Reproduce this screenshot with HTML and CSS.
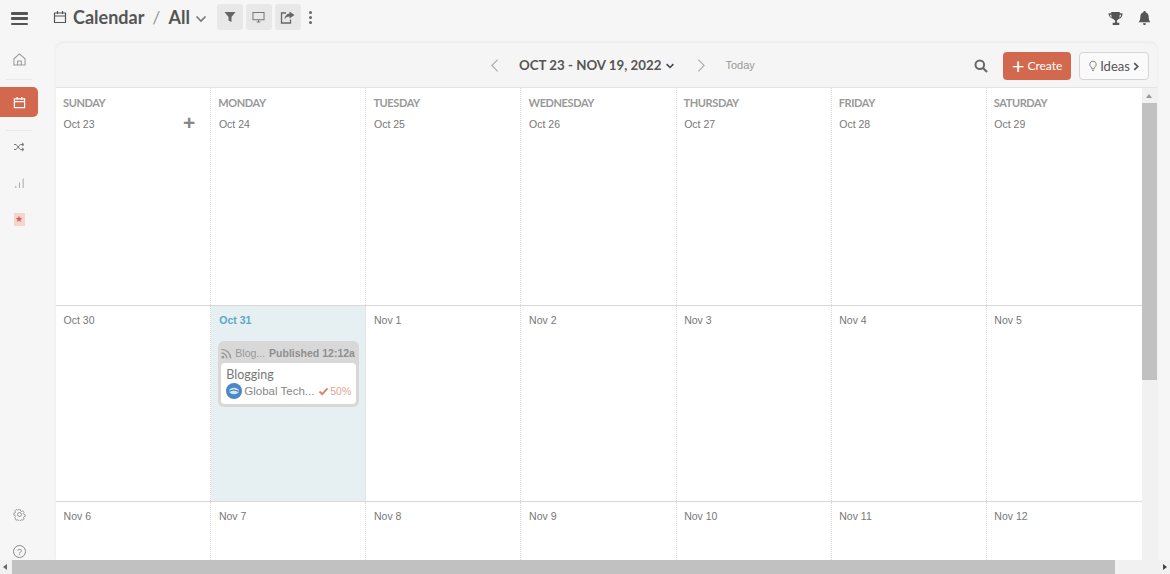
FILE: index.html
```html
<!DOCTYPE html>
<html lang="en">
<head>
<meta charset="utf-8">
<title>Calendar</title>
<link rel="stylesheet" href="styles.css">
</head>
<body>
<div class="app">
  <header class="topbar">
    <button class="burger" aria-label="Menu"><span></span><span></span><span></span></button>
    <svg class="title-icon" viewBox="0 0 14 14"><path d="M1.500 3h11v9.500h-11zM1.500 6h11M4.500 1v3M9.500 1v3" fill="none" stroke="#555" stroke-width="1.200"/></svg>
    <span class="title">Calendar</span>
    <span class="slash">/</span>
    <span class="title">All</span>
    <svg class="title-chev" viewBox="0 0 12 8"><path d="M1.500 1.500L6 6l4.500-4.500" fill="none" stroke="#777" stroke-width="1.600"/></svg>
    <div class="tools">
      <span class="tool"><svg viewBox="0 0 12 12" width="12" height="12"><path d="M.5 1h11L7.500 6v5l-3-1.500V6z" fill="#666"/></svg></span>
      <span class="tool"><svg viewBox="0 0 14 13" width="13" height="12"><path d="M1 1.500h12v8H1zM5 12h4M7 9.500V12" fill="none" stroke="#777" stroke-width="1.100"/></svg></span>
      <span class="tool"><svg viewBox="0 0 15 13" width="15" height="13"><path d="M6 2H1.500v10h9V8.500" fill="none" stroke="#666" stroke-width="1.300"/><path d="M9.500.5L14.500 4 9.500 7.500V5.600C7 5.600 5.400 6.500 4.600 8.600 4.600 5.300 6.600 2.900 9.500 2.600z" fill="#666"/></svg></span>
    </div>
    <span class="kebab"><i></i><i></i><i></i></span>
    <div class="top-right">
      <svg viewBox="0 0 18 16" width="17" height="15"><path d="M4.500 1h9v1.500h3c0 3.500-1.500 5.500-4.200 6-.6.8-1.300 1.300-1.800 1.500v2.500h2.500V15h-7v-2.500h2.500V10c-.5-.2-1.200-.7-1.800-1.500C4 8 1.500 6 1.500 2.500h3zM3 4c.2 1.500.9 2.600 2 3.200-.3-.9-.5-2-.5-3.200zM15 4h-1.500c0 1.200-.2 2.300-.5 3.200 1.100-.6 1.800-1.700 2-3.200z" fill="#555" fill-rule="evenodd"/></svg>
      <svg viewBox="0 0 14 16" width="13" height="15"><path d="M7 0c.8 0 1.200.5 1.200 1.200C10.500 1.800 11.500 3.800 11.500 6c0 3.500 1 5 2 6H.5c1-1 2-2.500 2-6 0-2.200 1-4.200 3.300-4.800C5.800.5 6.200 0 7 0zM5.300 13h3.400c0 1-.7 2-1.700 2s-1.700-1-1.700-2z" fill="#555"/></svg>
    </div>
  </header>
  <div class="main">
    <nav class="sidebar">
      <span class="side-item"><svg viewBox="0 0 14 14" width="13" height="13"><path d="M1 6.200L7 1l6 5.200V13H1zM5 13V8.500h4V13" fill="none" stroke="#999" stroke-width="1.100"/></svg></span>
      <span class="rule"></span>
      <span class="side-active"><svg viewBox="0 0 14 14" width="13" height="13"><path d="M1.500 3h11v9.500h-11zM1.500 6h11M4.500 1v3M9.500 1v3" fill="none" stroke="#fff" stroke-width="1.300"/></svg></span>
      <span class="rule"></span>
      <span class="side-item"><svg viewBox="0 0 14 12" width="12" height="10"><path d="M1 3h2.500l5 6H12M1 9h2.500l5-6H12M10.500 1L13 3l-2.500 2M10.500 7L13 9l-2.500 2" fill="none" stroke="#777" stroke-width="1.200"/></svg></span>
      <span class="side-item"><svg viewBox="0 0 12 12" width="11" height="12"><path d="M2 9v2.500M6 5.500v6M10 1v10.500" fill="none" stroke="#aaa" stroke-width="1.100"/></svg></span>
      <span class="side-item"><span class="star">★</span></span>
      <span class="side-spacer"></span>
      <span class="side-item"><svg viewBox="0 0 16 16" width="13" height="13"><circle cx="8" cy="8" r="2.400" fill="none" stroke="#888" stroke-width="1.100"/><path d="M6.700 1h2.600l.4 2 1.500.7 1.800-1 1.800 1.900-1.100 1.700.6 1.500 2 .5v2.500l-2 .5-.6 1.500 1.100 1.700-1.800 1.900-1.800-1-1.500.6-.4 1.900H6.700l-.4-1.900-1.500-.6-1.800 1L1.200 12.500l1.100-1.700-.6-1.500-2-.5V6.300l2-.5.600-1.500-1.100-1.700L3 .7l1.800 1 1.500-.7z" transform="translate(1.200 1.200) scale(.85)" fill="none" stroke="#888" stroke-width="1.100"/></svg></span>
      <span class="side-item help">?</span>
    </nav>
    <section class="card">
      <div class="toolbar">
        <svg class="nav-arrow" viewBox="0 0 10 16"><path d="M8.500 1.500L2 8l6.500 6.500" fill="none" stroke="#aaa" stroke-width="1.200"/></svg>
        <span class="range">OCT 23 - NOV 19, 2022</span>
        <svg class="range-chev" viewBox="0 0 12 8"><path d="M1.500 1.500L6 6l4.500-4.500" fill="none" stroke="#444" stroke-width="2"/></svg>
        <svg class="nav-arrow next" viewBox="0 0 10 16"><path d="M1.500 1.500L8 8l-6.500 6.500" fill="none" stroke="#aaa" stroke-width="1.200"/></svg>
        <span class="today">Today</span>
        <div class="actions">
          <svg viewBox="0 0 14 14" width="14" height="14"><circle cx="5.800" cy="5.800" r="4.300" fill="none" stroke="#666" stroke-width="2"/><path d="M9 9l4 4" stroke="#666" stroke-width="2.200"/></svg>
          <button class="create"><span class="plus">+</span><span class="create-label">Create</span></button>
          <button class="ideas"><svg viewBox="0 0 10 14" width="8" height="12"><path d="M5 1a4 4 0 0 0-2.400 7.200c.6.500.8 1.300.9 2.300h3c.1-1 .3-1.800.9-2.300A4 4 0 0 0 5 1zM3.700 12.500h2.600" fill="none" stroke="#666" stroke-width="1"/></svg>Ideas<svg viewBox="0 0 7 10" width="6" height="9"><path d="M1.500 1L5.500 5l-4 4" fill="none" stroke="#555" stroke-width="2"/></svg></button>
        </div>
      </div>
      <div class="body">
        <div class="grid">
          <div class="week week-a">
            <div class="day"><div class="dow">SUNDAY</div><div class="date">Oct 23</div><span class="add">+</span></div>
            <div class="day"><div class="dow">MONDAY</div><div class="date">Oct 24</div></div>
            <div class="day"><div class="dow">TUESDAY</div><div class="date">Oct 25</div></div>
            <div class="day"><div class="dow">WEDNESDAY</div><div class="date">Oct 26</div></div>
            <div class="day"><div class="dow">THURSDAY</div><div class="date">Oct 27</div></div>
            <div class="day"><div class="dow">FRIDAY</div><div class="date">Oct 28</div></div>
            <div class="day"><div class="dow">SATURDAY</div><div class="date">Oct 29</div></div>
          </div>
          <div class="week week-b">
            <div class="day"><div class="date">Oct 30</div></div>
            <div class="day current"><div class="date">Oct 31</div>
              <div class="event">
                <div class="event-head"><svg viewBox="0 0 12 12" width="11" height="11"><circle cx="2" cy="10" r="1.500" fill="#999"/><path d="M.5 5.500a6 6 0 0 1 6 6M.5 1.500a10 10 0 0 1 10 10" fill="none" stroke="#999" stroke-width="1.600"/></svg><span class="event-type">Blog...</span><span class="event-status">Published</span><span class="event-time">12:12a</span></div>
                <div class="event-body">
                  <div class="event-title">Blogging</div>
                  <div class="event-meta"><svg viewBox="0 0 16 16" width="16" height="16"><circle cx="8" cy="8" r="8" fill="#4a86c8"/><ellipse cx="8" cy="8" rx="5" ry="3.200" fill="#cfe3f3"/><path d="M3.500 8.500c2-2 6-2 9 0" fill="none" stroke="#2f6cab" stroke-width="1.200"/></svg><span class="event-site">Global Tech...</span><span class="event-pct"><svg viewBox="0 0 12 10" width="11" height="9"><path d="M1.500 5L4.500 8 10.500 1.500" fill="none" stroke="#d9806a" stroke-width="2"/></svg>50%</span></div>
                </div>
              </div>
            </div>
            <div class="day"><div class="date">Nov 1</div></div>
            <div class="day"><div class="date">Nov 2</div></div>
            <div class="day"><div class="date">Nov 3</div></div>
            <div class="day"><div class="date">Nov 4</div></div>
            <div class="day"><div class="date">Nov 5</div></div>
          </div>
          <div class="week week-c">
            <div class="day"><div class="date">Nov 6</div></div>
            <div class="day"><div class="date">Nov 7</div></div>
            <div class="day"><div class="date">Nov 8</div></div>
            <div class="day"><div class="date">Nov 9</div></div>
            <div class="day"><div class="date">Nov 10</div></div>
            <div class="day"><div class="date">Nov 11</div></div>
            <div class="day"><div class="date">Nov 12</div></div>
          </div>
        </div>
        <div class="vscroll"><span class="arrow-up"></span><span class="vthumb"></span></div>
      </div>
    </section>
  </div>
  <div class="hscroll"><span class="arrow-left"></span><span class="hthumb"></span><span class="arrow-right"></span></div>
</div>
</body>
</html>
```
FILE: styles.css
```css
* { box-sizing: border-box; }
html, body { margin: 0; height: 100%; overflow: hidden; }
body { background: #f6f6f6; font-family: "Liberation Sans", Arial, sans-serif; color: #666; }
button { font: inherit; padding: 0; }
.app { width: 1170px; height: 574px; display: flex; flex-direction: column; overflow: hidden; }

.topbar { height: 43px; flex: none; display: flex; align-items: flex-start; position: relative; }
.burger { width: 17px; height: 13px; margin: 12px 0 0 11px; border: 0; background: none; display: flex; flex-direction: column; justify-content: space-between; }
.burger span { display: block; height: 2.500px; background: #555; border-radius: 1px; }
.title-icon { width: 14px; height: 14px; margin: 10px 0 0 25px; }
.title { font: 700 18px/18px Lato, sans-serif; color: #555; margin-top: 8px; }
.title-icon + .title { margin-left: 6px; }
.slash { font: 400 18px/18px Lato, sans-serif; color: #999; margin: 8px 8px 0 8px; }
.title-chev { width: 12px; height: 8px; margin: 15px 0 0 5px; }
.tools { display: flex; gap: 3px; margin: 4px 0 0 10px; }
.tool { width: 26px; height: 26px; background: #e8e8e8; border-radius: 3px; display: flex; align-items: center; justify-content: center; }
.kebab { display: flex; flex-direction: column; gap: 2px; margin: 11px 0 0 8px; }
.kebab i { width: 3px; height: 3px; background: #666; border-radius: 50%; }
.top-right { margin: 11px 19px 0 auto; display: flex; gap: 14px; }

.main { flex: 1; min-height: 0; display: flex; }
.sidebar { width: 56px; flex: none; display: flex; flex-direction: column; align-items: flex-start; padding-top: 7px; }
.side-item { width: 38px; height: 18px; display: flex; align-items: center; justify-content: center; margin-bottom: 18px; }
.rule { width: 26px; height: 1px; background: #e9e9e9; margin: -7px 0 7px 6px; }
.side-active { width: 38px; height: 30px; background: #d2694f; border-radius: 0 5px 5px 0; display: flex; align-items: center; justify-content: center; margin-bottom: 20px; }
.star { width: 11px; height: 13px; background: #f6d5cc; color: #e0565a; font-size: 9px; line-height: 13px; text-align: center; }
.side-spacer { flex: 1; }
.side-item:nth-last-child(2) { margin-bottom: 22px; }
.help { width: 13px; height: 13px; margin: 0 0 2px 13px; border: 1px solid #888; border-radius: 50%; font-size: 9px; color: #888; }

.card { flex: 1; min-width: 0; margin-right: 13px; display: flex; flex-direction: column; background: #f5f5f5; border-radius: 8px 8px 0 0; box-shadow: 0 -1px 3px #e6e6e6; overflow: hidden; }
.toolbar { height: 45px; flex: none; display: flex; align-items: center; border-bottom: 1px solid #e4e4e4; padding-left: 434px; padding-right: 8px; }
.nav-arrow { width: 9px; height: 15px; }
.range { font: 700 13.300px/18px Lato, sans-serif; color: #555; margin-left: 20px; }
.range-chev { width: 10px; height: 6px; margin-left: 4px; margin-top: 2px; }
.nav-arrow.next { margin-left: 22px; }
.today { font-size: 11px; color: #999; margin-left: 19px; }
.actions { margin-left: auto; margin-top: 2px; display: flex; align-items: center; }
.create { width: 68px; height: 28px; margin-left: 15px; background: #d2694f; color: #fff; border: 0; border-radius: 4px; font: 400 12px Lato, sans-serif; display: flex; align-items: center; justify-content: center; gap: 3px; }
.create-label { margin-bottom: 2px; }
.plus { font-size: 22px; line-height: 22px; font-weight: 400; }
.ideas { width: 70px; height: 28px; margin-left: 8px; background: #fafafa; color: #555; border: 1px solid #d5d5d5; border-radius: 4px; font: 400 13px Lato, sans-serif; display: flex; align-items: center; justify-content: center; gap: 3px; }

.body { flex: 1; min-height: 0; display: flex; }
.grid { flex: 1; min-width: 0; background: #fff; overflow: hidden; }
.week { display: grid; grid-template-columns: 155.300px repeat(6, 155.100px); border-bottom: 1px solid #d8d8d8; }
.week-a { height: 218px; }
.week-b { height: 196px; }
.week-c { height: 60px; border-bottom: 0; }
.day { position: relative; border-right: 1px dotted #dcdcdc; padding: 7px 8px 0 7px; }
.day:last-child { border-right: 0; }
.dow { font: 700 11px/15px Lato, sans-serif; color: #999; margin-bottom: 7px; letter-spacing: -.4px; }
.date { font-size: 10.500px; line-height: 14px; color: #777; padding-left: .6px; }
.add { position: absolute; top: 25px; right: 15px; font: 700 21px/19px "Liberation Sans", sans-serif; color: #888; }
.current { background: #e6eff2; padding-right: 7px; }
.current .date { color: #5aa9c4; font-weight: 700; padding-left: 1px; }
.event { margin-top: 14px; background: #d8d8d8; border-radius: 6px; padding: 3px; width: 141px; }
.event-head { height: 19px; display: flex; align-items: center; gap: 3px; font-size: 10.500px; font-weight: 700; color: #999; white-space: nowrap; padding-bottom: 1px; }
.event-status, .event-time { color: #8f8f8f; }
.event-type { font-weight: 400; }
.event-status { margin-left: 1px; }
.event-body { background: #fff; border-radius: 4px; padding: 4px 5px 3px; height: 41px; }
.event-title { font: 400 12.500px/16px Lato, sans-serif; color: #777; }
.event-meta { display: flex; align-items: center; gap: 2px; font-size: 11.500px; color: #888; white-space: nowrap; }
.event-site { flex: 1; }
.event-pct { display: flex; align-items: center; gap: 1px; color: #dfa594; font-size: 10.500px; }

.vscroll { width: 15px; flex: none; background: #f1f1f1; padding-top: 15px; position: relative; }
.arrow-up { position: absolute; top: 6px; left: 4px; border: 3px solid transparent; border-top: 0; border-bottom: 4px solid #999; }
.vthumb { display: block; height: 277px; background: #c1c1c1; }
.hscroll { height: 14px; flex: none; background: #f1f1f1; display: flex; align-items: center; padding-left: 12px; position: relative; }
.hthumb { width: 1103px; height: 14px; background: #c1c1c1; }
.arrow-left { position: absolute; left: 3px; top: 4px; border: 3px solid transparent; border-left: 0; border-right: 4px solid #666; }
.arrow-right { position: absolute; right: 3px; top: 4px; border: 3px solid transparent; border-right: 0; border-left: 4px solid #444; }
```
